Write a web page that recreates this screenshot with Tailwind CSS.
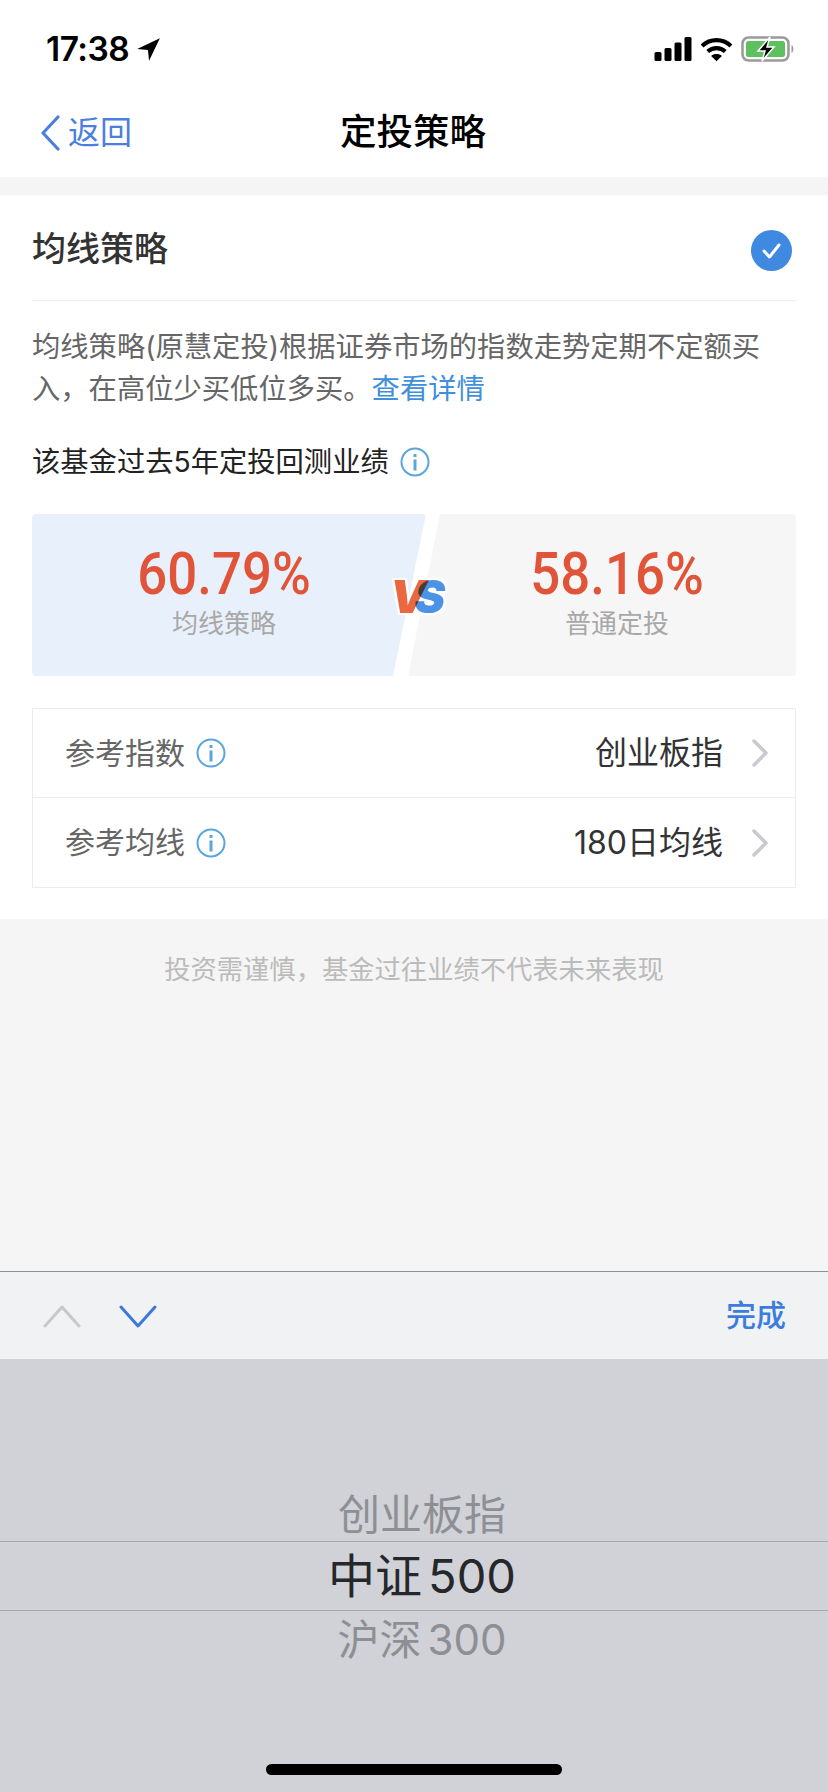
<!DOCTYPE html>
<html lang="zh">
<head>
    <meta charset="utf-8">
    <meta name="viewport" content="width=device-width, initial-scale=1">
    <title>定投策略</title>
    <script src="https://cdn.jsdelivr.net/npm/@tailwindcss/browser@4"></script>
</head>
<body class="bg-white font-['Inter','Noto_Sans_CJK_SC',sans-serif]">
    <div class="w-[828px] h-[1792px] flex flex-col overflow-hidden">

        <!-- Status bar -->
        <div class="h-[88px] shrink-0 flex items-center justify-between pl-[46px] pr-[33px] pt-[10px]">
            <div class="flex items-center gap-[7px] text-[33.500px] font-semibold text-black tracking-[-0.5px]">
                <span>17:38</span>
                <svg width="25" height="25" viewBox="0 0 22 22"><path d="M21 1 L1 10.5 L10.5 11.5 L11.5 21 Z" fill="#000"/></svg>
            </div>
            <div class="flex items-center gap-[8px]">
                <svg width="38" height="24" viewBox="0 0 37 24" fill="#000">
                    <rect x="0" y="15" width="7" height="9" rx="1.5"/>
                    <rect x="10" y="11" width="7" height="13" rx="1.5"/>
                    <rect x="20" y="5.500" width="7" height="18.500" rx="1.500"/>
                    <rect x="30" y="0" width="7" height="24" rx="1.500"/>
                </svg>
                <svg width="33" height="25" viewBox="0 0 32 24" fill="none" stroke="#000" stroke-width="4">
                    <path d="M2 8.500 C10 1 22 1 30 8.500"/>
                    <path d="M7.500 14 C12.500 9.500 19.500 9.500 24.500 14"/>
                    <path d="M16 23.500 L10.800 18.300 C13.500 15.800 18.500 15.800 21.200 18.300 Z" fill="#000" stroke="none"/>
                </svg>
                <svg width="54" height="26" viewBox="0 0 54 26" fill="none">
                    <rect x="1.500" y="1.500" width="46" height="23" rx="6" stroke="#9a9a9a" stroke-width="2.500"/>
                    <rect x="5" y="5" width="39" height="16" rx="2.500" fill="#5ec05e"/>
                    <path d="M50.500 9 C53 10 53 16 50.500 17 Z" fill="#9a9a9a"/>
                    <path d="M29 1 L17 15 H24 L21 25 L33 11 H26 Z" fill="#000" stroke="#fff" stroke-width="1.500"/>
                </svg>
            </div>
        </div>

        <!-- Nav -->
        <div class="h-[89px] shrink-0 relative flex items-center justify-center pr-[2px]">
            <div class="absolute left-[40px] top-0 h-full flex items-center gap-[7px] text-[32px] text-[#4a7fe0]">
                <svg width="21" height="36" viewBox="0 0 21 36" fill="none" stroke="#4a7fe0" stroke-width="3.200" stroke-linecap="round" stroke-linejoin="round"><path d="M18 2 L3 18 L18 34"/></svg>
                <span>返回</span>
            </div>
            <h1 class="text-[36.500px] font-medium text-black">定投策略</h1>
        </div>

        <div class="h-[18px] shrink-0 bg-[#f5f5f5]"></div>

        <!-- Card -->
        <div class="h-[724px] shrink-0 bg-white px-[32px]">
            <div class="h-[106px] pt-[6px] flex items-center justify-between border-b border-[#eeeeee] pr-[4px]">
                <h2 class="text-[34px] font-medium text-[#333333] -mt-[4px]">均线策略</h2>
                <svg width="41" height="41" viewBox="0 0 41 41"><circle cx="20.500" cy="20.500" r="20.500" fill="#3f8ae0"/><path d="M13 21 L18.500 27 L28 15" fill="none" stroke="#fff" stroke-width="3" stroke-linecap="round" stroke-linejoin="round"/></svg>
            </div>
            <p class="mt-[25px] text-[28.300px] leading-[42px] text-[#666666]">均线策略(原慧定投)根据证券市场的指数走势定期不定额买<br>入，在高位少买低位多买。<span class="text-[#3f8fdc]">查看详情</span></p>
            <div class="mt-[31px] flex items-center gap-[11px] h-[42px] text-[28.300px] text-[#222222]">
                <span>该基金过去5年定投回测业绩</span>
                <svg width="30" height="30" viewBox="0 0 30 30" fill="none"><circle cx="15" cy="15" r="13.500" stroke="#5aa5dc" stroke-width="2"/><rect x="13.500" y="12.500" width="3" height="11" fill="#5aa5dc"/><rect x="13.500" y="7" width="3" height="3" fill="#5aa5dc"/></svg>
            </div>

            <!-- Compare -->
            <div class="relative mt-[31px] h-[162px] flex">
                <div class="w-[394px] h-full shrink-0 bg-[#e8f1fb] rounded-[4px] [clip-path:polygon(0_0,100%_0,361px_100%,0_100%)] flex flex-col items-center pr-[10px] pt-[30px]">
                    <div class="text-[59px] leading-[60px] font-medium scale-x-[0.895] font-['Roboto','Noto_Sans_CJK_SC',sans-serif] text-[#e0553a]">60.79%</div>
                    <div class="mt-[2px] text-[26px] leading-[36px] text-[#a8a8a8]">均线策略</div>
                </div>
                <div class="w-[388px] h-full shrink-0 -ml-[18px] bg-[#f6f6f6] rounded-[4px] [clip-path:polygon(32px_0,100%_0,100%_100%,0_100%)] flex flex-col items-center pl-[30px] pt-[30px]">
                    <div class="text-[59px] leading-[60px] font-medium scale-x-[0.895] font-['Roboto','Noto_Sans_CJK_SC',sans-serif] text-[#e0553a]">58.16%</div>
                    <div class="mt-[2px] text-[26px] leading-[36px] text-[#a8a8a8]">普通定投</div>
                </div>
                <div class="absolute left-[358px] top-[57px] flex items-center font-black italic text-[46px] leading-[50px] font-['Inter',sans-serif] [filter:drop-shadow(2px_0_0_#fff)_drop-shadow(-2px_0_0_#fff)_drop-shadow(0_2px_0_#fff)_drop-shadow(0_-2px_0_#fff)]">
                    <span class="text-[#e9683f]">V</span><span class="text-[#4a93e6] -ml-[12px] mix-blend-multiply">S</span>
                </div>
            </div>

            <!-- Table -->
            <div class="mt-[32px] border border-[#ececec]">
                <div class="h-[89px] flex items-center justify-between pl-[32px] pr-[27px] border-b border-[#ececec]">
                    <div class="flex items-center gap-[11px] text-[30px] text-[#666666]">
                        <span>参考指数</span>
                        <svg width="30" height="30" viewBox="0 0 30 30" fill="none"><circle cx="15" cy="15" r="13.500" stroke="#5aa5dc" stroke-width="2"/><rect x="13.500" y="12.500" width="3" height="11" fill="#5aa5dc"/><rect x="13.500" y="7" width="3" height="3" fill="#5aa5dc"/></svg>
                    </div>
                    <div class="flex items-center gap-[29px] text-[32px] text-[#333333]">
                        <span>创业板指</span>
                        <svg width="16" height="28" viewBox="0 0 16 28" fill="none" stroke="#c9cacf" stroke-width="3.500" stroke-linecap="round" stroke-linejoin="round"><path d="M2 2 L14 14 L2 26"/></svg>
                    </div>
                </div>
                <div class="h-[89px] flex items-center justify-between pl-[32px] pr-[27px]">
                    <div class="flex items-center gap-[11px] text-[30px] text-[#666666]">
                        <span>参考均线</span>
                        <svg width="30" height="30" viewBox="0 0 30 30" fill="none"><circle cx="15" cy="15" r="13.500" stroke="#5aa5dc" stroke-width="2"/><rect x="13.500" y="12.500" width="3" height="11" fill="#5aa5dc"/><rect x="13.500" y="7" width="3" height="3" fill="#5aa5dc"/></svg>
                    </div>
                    <div class="flex items-center gap-[29px] text-[32px] text-[#333333]">
                        <span>180日均线</span>
                        <svg width="16" height="28" viewBox="0 0 16 28" fill="none" stroke="#c9cacf" stroke-width="3.500" stroke-linecap="round" stroke-linejoin="round"><path d="M2 2 L14 14 L2 26"/></svg>
                    </div>
                </div>
            </div>
        </div>

        <!-- Disclaimer -->
        <div class="h-[352px] shrink-0 bg-[#f5f5f5] pt-[32px] text-center text-[26.300px] leading-[38px] text-[#bbbbbb]">投资需谨慎，基金过往业绩不代表未来表现</div>

        <!-- Toolbar -->
        <div class="h-[88px] shrink-0 bg-[#f0f2f4] border-t border-[#8e9094] flex items-center justify-between pl-[43px] pr-[42px]">
            <div class="flex items-center gap-[38px]">
                <svg width="38" height="24" viewBox="0 0 38 24" fill="none" stroke="#c6c8cb" stroke-width="3" stroke-linecap="round" stroke-linejoin="round"><path d="M2 22 L19 3 L36 22"/></svg>
                <svg width="38" height="24" viewBox="0 0 38 24" fill="none" stroke="#3b78dd" stroke-width="3" stroke-linecap="round" stroke-linejoin="round"><path d="M2 3 L19 22 L36 3"/></svg>
            </div>
            <span class="text-[30px] font-medium text-[#3b7ddd]">完成</span>
        </div>

        <!-- Picker -->
        <div class="flex-1 bg-[#d0d2d7] relative flex flex-col items-center pt-[125px]">
            <div class="h-[57px] pt-[4px] flex items-center text-[42px] text-[#8e8f94] pl-[16px]">创业板指</div>
            <div class="w-full h-[70px] border-y border-[#a9abb0] flex items-center justify-center text-[47px] text-[#26272b] pl-[16px]"><span>中证</span><span class="ml-[6px]">500</span></div>
            <div class="h-[57px] flex items-center text-[42px] text-[#8e8f94] pl-[16px]"><span>沪深</span><span class="ml-[6px]">300</span></div>
            <div class="absolute left-[266px] top-[405px] w-[296px] h-[11px] rounded-full bg-black"></div>
        </div>
    </div>
</body>
</html>
